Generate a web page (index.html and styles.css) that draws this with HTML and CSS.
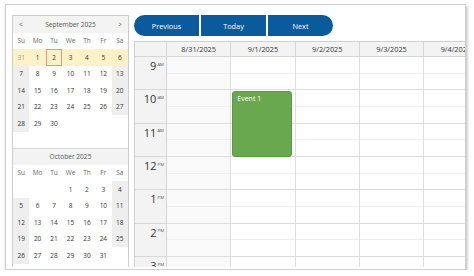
FILE: index.html
```html
<!DOCTYPE html>
<html>
<head>
<meta charset="utf-8">
<link rel="stylesheet" href="styles.css">
</head>
<body>
<div class="frame">
  <div class="inner">
    <div class="nav">
      <div class="month">
        <div class="mhead"><span class="arr">&lt;</span><span class="mtitle">September 2025</span><span class="arr">&gt;</span></div>
        <div class="dnames"><span>Su</span><span>Mo</span><span>Tu</span><span>We</span><span>Th</span><span>Fr</span><span>Sa</span></div>
        <div class="days">
          <span class="d sel other">31</span><span class="d sel">1</span><span class="d sel today">2</span><span class="d sel">3</span><span class="d sel">4</span><span class="d sel">5</span><span class="d sel">6</span>
          <span class="d we">7</span><span class="d">8</span><span class="d">9</span><span class="d">10</span><span class="d">11</span><span class="d">12</span><span class="d we">13</span>
          <span class="d we">14</span><span class="d">15</span><span class="d">16</span><span class="d">17</span><span class="d">18</span><span class="d">19</span><span class="d we">20</span>
          <span class="d we">21</span><span class="d">22</span><span class="d">23</span><span class="d">24</span><span class="d">25</span><span class="d">26</span><span class="d we">27</span>
          <span class="d we">28</span><span class="d">29</span><span class="d">30</span><span class="d"></span><span class="d"></span><span class="d"></span><span class="d"></span>
          <span class="d"></span><span class="d"></span><span class="d"></span><span class="d"></span><span class="d"></span><span class="d"></span><span class="d"></span>
        </div>
      </div>
      <div class="month">
        <div class="mhead mhead2"><span class="mtitle">October 2025</span></div>
        <div class="dnames"><span>Su</span><span>Mo</span><span>Tu</span><span>We</span><span>Th</span><span>Fr</span><span>Sa</span></div>
        <div class="days">
          <span class="d"></span><span class="d"></span><span class="d"></span><span class="d">1</span><span class="d">2</span><span class="d">3</span><span class="d we">4</span>
          <span class="d we">5</span><span class="d">6</span><span class="d">7</span><span class="d">8</span><span class="d">9</span><span class="d">10</span><span class="d we">11</span>
          <span class="d we">12</span><span class="d">13</span><span class="d">14</span><span class="d">15</span><span class="d">16</span><span class="d">17</span><span class="d we">18</span>
          <span class="d we">19</span><span class="d">20</span><span class="d">21</span><span class="d">22</span><span class="d">23</span><span class="d">24</span><span class="d we">25</span>
          <span class="d we">26</span><span class="d">27</span><span class="d">28</span><span class="d">29</span><span class="d">30</span><span class="d">31</span><span class="d"></span>
          <span class="d"></span><span class="d"></span><span class="d"></span><span class="d"></span><span class="d"></span><span class="d"></span><span class="d"></span>
        </div>
      </div>
    </div>
    <div class="sched">
      <div class="toolbar">
        <button class="btn btn-first">Previous</button>
        <button class="btn">Today</button>
        <button class="btn btn-last">Next</button>
      </div>
      <div class="grid">
        <div class="hrow">
          <div class="corner"></div>
          <div class="colh">8/31/2025</div>
          <div class="colh">9/1/2025</div>
          <div class="colh">9/2/2025</div>
          <div class="colh">9/3/2025</div>
          <div class="colh">9/4/2025</div>
        </div>
        <div class="body">
          <div class="timecol">
            <div class="hour"><span class="hn">9</span><span class="ap">AM</span></div>
            <div class="hour"><span class="hn">10</span><span class="ap">AM</span></div>
            <div class="hour"><span class="hn">11</span><span class="ap">AM</span></div>
            <div class="hour"><span class="hn">12</span><span class="ap">PM</span></div>
            <div class="hour"><span class="hn">1</span><span class="ap">PM</span></div>
            <div class="hour"><span class="hn">2</span><span class="ap">PM</span></div>
            <div class="hour"><span class="hn">3</span><span class="ap">PM</span></div>
          </div>
          <div class="col col-off">
            <div class="half"></div><div class="half"></div><div class="half"></div><div class="half"></div><div class="half"></div><div class="half"></div><div class="half"></div><div class="half"></div><div class="half"></div><div class="half"></div><div class="half"></div><div class="half"></div><div class="half"></div><div class="half"></div>
          </div>
          <div class="col">
            <div class="half"></div><div class="half"></div><div class="half"></div><div class="half"></div><div class="half"></div><div class="half"></div><div class="half"></div><div class="half"></div><div class="half"></div><div class="half"></div><div class="half"></div><div class="half"></div><div class="half"></div><div class="half"></div>
            <div class="event">Event 1</div>
          </div>
          <div class="col">
            <div class="half"></div><div class="half"></div><div class="half"></div><div class="half"></div><div class="half"></div><div class="half"></div><div class="half"></div><div class="half"></div><div class="half"></div><div class="half"></div><div class="half"></div><div class="half"></div><div class="half"></div><div class="half"></div>
          </div>
          <div class="col">
            <div class="half"></div><div class="half"></div><div class="half"></div><div class="half"></div><div class="half"></div><div class="half"></div><div class="half"></div><div class="half"></div><div class="half"></div><div class="half"></div><div class="half"></div><div class="half"></div><div class="half"></div><div class="half"></div>
          </div>
          <div class="col">
            <div class="half"></div><div class="half"></div><div class="half"></div><div class="half"></div><div class="half"></div><div class="half"></div><div class="half"></div><div class="half"></div><div class="half"></div><div class="half"></div><div class="half"></div><div class="half"></div><div class="half"></div><div class="half"></div>
          </div>
        </div>
      </div>
    </div>
  </div>
</div>
</body>
</html>
```

FILE: styles.css
```css
* { box-sizing: border-box; }
html, body { margin: 0; padding: 0; background: #fff; }
body { font-family: "Open Sans", "Noto Sans", sans-serif; color: #333; }

.frame {
  margin: 4px 0 0 5px;
  width: 461px;
  height: 266px;
  border: 1px solid #cfcfcf;
  box-shadow: 1px 2px 3px rgba(0,0,0,0.3);
  background: #fff;
  overflow: hidden;
}
.inner {
  display: flex;
  gap: 5px;
  padding: 10px 0 0 6px;
  height: 262px;
  overflow: hidden;
}

/* navigator */
.nav {
  flex: none;
  width: 117px;
  border: 1px solid #cccccc;
  border-bottom: none;
  align-self: flex-start;
  font-size: 6.5px;
}
.mhead {
  height: 16.5px;
  background: #f3f3f3;
  display: flex;
  align-items: center;
  justify-content: space-between;
  padding: 0 6px;
  color: #555;
}
.mhead2 { justify-content: center; border-top: 1px solid #d6d6d6; }
.arr { font-size: 6.4px; color: #555; }
.mtitle { font-size: 6.6px; }
.dnames, .days {
  display: grid;
  grid-template-columns: repeat(7, 1fr);
}
.dnames span {
  height: 16.5px;
  display: flex;
  align-items: center;
  justify-content: center;
  color: #666;
}
.d {
  height: 16.5px;
  display: flex;
  align-items: center;
  justify-content: center;
  color: #333;
}
.d.we { background: #eeeeee; }
.d.sel { background: #fdf1c7; }
.d.other { color: #9a9a9a; }
.d.today { border: 1px solid #e0968a; }

/* scheduler */
.sched {
  flex: none;
  width: 360px;
  display: flex;
  flex-direction: column;
}
.toolbar {
  display: flex;
  gap: 2px;
  height: 21px;
}
.btn {
  width: 65px;
  height: 21px;
  border: none;
  margin: 0;
  padding: 0;
  background: #0b5a9b;
  color: #fff;
  font-family: "Open Sans", "Noto Sans", sans-serif;
  font-size: 7.3px;
}
.btn-first { border-radius: 10.5px 0 0 10.5px; }
.btn-last { border-radius: 0 10.5px 10.5px 0; }

.grid {
  margin-top: 5px;
  border-top: 1px solid #d0d0d0;
  border-left: 1px solid #d0d0d0;
}
.hrow {
  display: flex;
  height: 15px;
  background: #f3f3f3;
  border-bottom: 1px solid #d6d6d6;
}
.corner { width: 32px; flex: none; border-right: 1px solid #d6d6d6; }
.colh {
  width: 64.3px;
  flex: none;
  border-right: 1px solid #d6d6d6;
  display: flex;
  align-items: center;
  justify-content: center;
  font-size: 7.3px;
  color: #333;
  white-space: nowrap;
}
.body { display: flex; }
.timecol {
  width: 32px;
  flex: none;
  background: #f3f3f3;
  border-right: 1px solid #d6d6d6;
}
.hour {
  height: 33.35px;
  border-bottom: 1px solid #d9d9d9;
  display: flex;
  justify-content: flex-end;
  align-items: flex-start;
  padding: 3px 2px 0 0;
}
.hn { font-size: 11px; line-height: 1; color: #333; }
.ap { font-size: 4.3px; line-height: 1; color: #555; margin: 1.5px 0 0 1px; }

.col {
  position: relative;
  width: 64.3px;
  flex: none;
  border-right: 1px solid #dedede;
}
.col-off { background: #f9f9f9; }
.half { height: 16.675px; border-bottom: 1px solid #efefef; }
.half:nth-child(2n) { border-bottom-color: #dcdcdc; }

.event {
  position: absolute;
  top: 34.3px;
  left: 1px;
  right: 3px;
  height: 65.6px;
  background: #6aa84f;
  border: 1px solid #5c9944;
  border-radius: 3px;
  color: #fff;
  font-size: 7px;
  padding: 2px 4px;
}
```
